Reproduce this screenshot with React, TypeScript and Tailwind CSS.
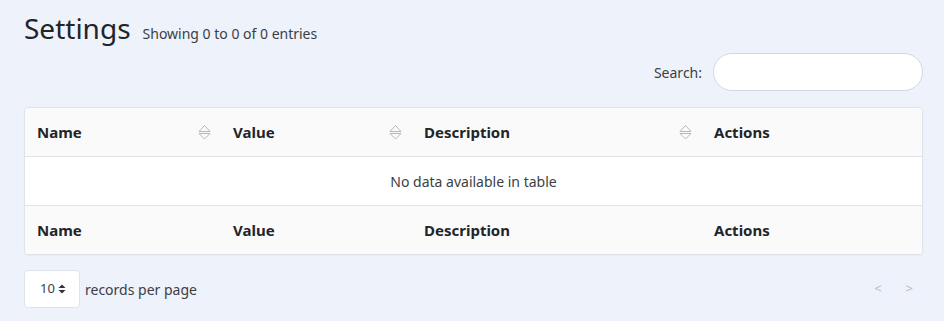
import React from "react";

const columns = [
  { label: "Name", width: "w-[196px]", sortable: true },
  { label: "Value", width: "w-[191px]", sortable: true },
  { label: "Description", width: "w-[290px]", sortable: true },
  { label: "Actions", width: "flex-1", sortable: false },
];

function SortIcon() {
  return (
    <svg width="13" height="16" viewBox="0 0 13 16" className="block h-[16px] w-[13px] shrink-0">
      <path d="M1 7.5 L6.5 1.5 L12 7.5 Z" fill="none" stroke="#b4b8be" strokeWidth="1" strokeLinejoin="round" />
      <path d="M1 9.5 L6.5 15 L12 9.5 Z" fill="none" stroke="#b4b8be" strokeWidth="1" strokeLinejoin="round" />
    </svg>
  );
}

function HeaderRow({ icons }: { icons: boolean }) {
  return (
    <div className="flex h-[48px] items-center bg-[#fafafa]">
      {columns.map((c) => (
        <div key={c.label} className={`${c.width} flex items-center justify-between pl-[12px] pr-[10px]`}>
          <span className="text-[15px] font-bold text-[#212529]">{c.label}</span>
          {icons && c.sortable && <SortIcon />}
        </div>
      ))}
    </div>
  );
}

export default function App() {
  return (
    <div
      className="min-h-[321px] bg-[#eef2fb] pl-6 pr-[21px] pt-[9px] text-[#212529]"
      style={{ fontFamily: '"Noto Sans", "Open Sans", sans-serif' }}
    >
      <div className="flex items-baseline gap-[12px]">
        <h1 className="text-[28px] leading-[38px] text-[#212529]">Settings</h1>
        <span className="text-[14px] text-[#3a3f44]">Showing 0 to 0 of 0 entries</span>
      </div>

      <div className="mt-[6px] flex items-center justify-end gap-[11px]">
        <span className="text-[14px] text-[#3a3f44]">Search:</span>
        <input className="h-[38px] w-[210px] rounded-full border border-[#d3d9e3] bg-white outline-none" />
      </div>

      <div className="mt-[16px] overflow-hidden rounded-[4px] border border-[#dfe3ea] bg-white shadow-[0_1px_2px_rgba(0,0,0,0.04)]">
        <HeaderRow icons />
        <div className="flex h-[50px] items-center justify-center border-y border-[#dfe3ea] bg-white text-[14px] text-[#3a3f44]">
          No data available in table
        </div>
        <HeaderRow icons={false} />
      </div>

      <div className="mt-[15px] flex items-center justify-between">
        <div className="flex items-center gap-[5px]">
          <div className="flex h-[38px] w-[56px] items-center justify-center gap-[3px] rounded-[4px] border border-[#dfe3ea] bg-white pl-[2px] text-[13px] text-[#3a3f44]">
            <span>10</span>
            <svg width="8" height="10" viewBox="0 0 8 10">
              <path d="M0.5 4 L4 0.5 L7.5 4 Z" fill="#333" />
              <path d="M0.5 6 L4 9.5 L7.5 6 Z" fill="#333" />
            </svg>
          </div>
          <span className="text-[14px] text-[#3a3f44]">records per page</span>
        </div>
        <div className="flex items-center gap-[24px] pr-[10px] text-[13px] text-[#b6bac0]">
          <span>&lt;</span>
          <span>&gt;</span>
        </div>
      </div>
    </div>
  );
}
